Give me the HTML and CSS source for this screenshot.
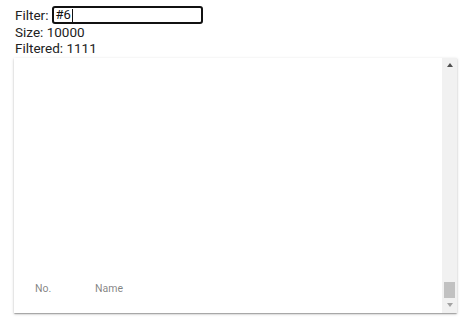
FILE: index.html
```html
<!DOCTYPE html>
<html>
<head>
<meta charset="utf-8">
<link rel="stylesheet" href="styles.css">
</head>
<body>
<div class="controls">
  <div class="line">Filter: <span class="input">#6<span class="caret"></span></span></div>
  <div class="line">Size: 10000</div>
  <div class="line">Filtered: 1111</div>
</div>
<div class="paper">
  <div class="content">
    <div class="head-row">
      <div class="cell no">No.</div>
      <div class="cell name">Name</div>
    </div>
  </div>
  <div class="scrollbar">
    <div class="arrow up"></div>
    <div class="track"><div class="thumb"></div></div>
    <div class="arrow down"></div>
  </div>
</div>
</body>
</html>
```
FILE: styles.css
```css
html, body { margin: 0; padding: 0; background: #fff; }
body {
  font-family: Roboto, "Liberation Sans", sans-serif;
  font-size: 13.5px;
  color: #222;
  width: 474px;
  height: 333px;
  overflow: hidden;
}
.controls { padding: 7px 0 0 15px; }
.line { line-height: 16.5px; height: 16.5px; display: flex; align-items: center; }
.input {
  display: inline-flex;
  align-items: center;
  box-sizing: border-box;
  margin-left: 4px;
  width: 151px;
  height: 18px;
  border: 2px solid #111;
  border-radius: 3px;
  padding-left: 1px;
  font-size: 13px;
  color: #111;
}
.caret { display: inline-block; width: 1px; height: 13px; background: #111; margin-left: 1px; }
.paper {
  margin: 1px 0 0 14px;
  width: 443px;
  height: 255px;
  display: flex;
  background: #fff;
  box-shadow: 0 1px 3px rgba(0,0,0,0.2), 0 1px 1px rgba(0,0,0,0.14), 0 2px 1px -1px rgba(0,0,0,0.12);
}
.content {
  flex: 1;
  display: flex;
  flex-direction: column;
  justify-content: flex-end;
  padding-bottom: 5px;
}
.head-row {
  display: flex;
  height: 38px;
  align-items: center;
  font-size: 10.5px;
  color: rgba(0,0,0,0.5);
}
.cell.no { width: 60px; padding-left: 21px; }
.cell.name { padding-left: 0; }
.scrollbar {
  width: 15px;
  background: #f1f1f1;
  display: flex;
  flex-direction: column;
}
.arrow { height: 15px; display: flex; align-items: center; justify-content: center; }
.arrow.up::before {
  content: "";
  border-left: 3.5px solid transparent;
  border-right: 3.5px solid transparent;
  border-bottom: 4px solid #505050;
}
.arrow.down::before {
  content: "";
  border-left: 3.5px solid transparent;
  border-right: 3.5px solid transparent;
  border-top: 4px solid #a3a3a3;
}
.track { flex: 1; display: flex; flex-direction: column; justify-content: flex-end; padding: 0 2px; }
.thumb { height: 16px; background: #c1c1c1; }
```
